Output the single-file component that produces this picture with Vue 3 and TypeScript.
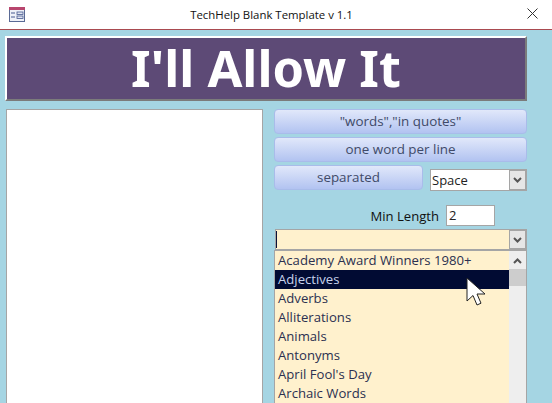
<script setup lang="ts">
const items: string[] = [
  'Academy Award Winners 1980+',
  'Adjectives',
  'Adverbs',
  'Alliterations',
  'Animals',
  'Antonyms',
  "April Fool's Day",
  'Archaic Words',
]
const selected = 'Adjectives'
</script>

<template>
  <div class="window">
    <header class="titlebar">
      <svg class="app-icon" width="16" height="16" viewBox="0 0 16 16">
        <rect x="0.5" y="0.5" width="15" height="14" fill="#eef1f8" stroke="#5a6a95" />
        <rect x="0" y="0" width="16" height="3" fill="#b8466e" />
        <path d="M2 6h4M2 10h4" stroke="#47598f" stroke-width="1" />
        <rect x="8" y="5" width="6" height="2.5" fill="#dfe4f1" stroke="#47598f" stroke-width="0.8" />
        <rect x="8" y="9" width="6" height="2.5" fill="#dfe4f1" stroke="#47598f" stroke-width="0.8" />
      </svg>
      <span class="title">TechHelp Blank Template v 1.1</span>
      <svg class="close" width="11" height="11" viewBox="0 0 11 11">
        <path d="M0.5 0.5l10 10M10.500 0.5l-10 10" stroke="#333" stroke-width="1" fill="none" />
      </svg>
    </header>

    <main class="form">
      <div class="banner">I'll Allow It</div>
      <div class="columns">
        <div class="output"></div>
        <div class="controls">
          <button class="btn">"words","in quotes"</button>
          <button class="btn">one word per line</button>
          <div class="sep-row">
            <button class="btn sep">separated</button>
            <div class="select">
              <span class="select-value">Space</span>
              <span class="drop">
                <svg width="9" height="6" viewBox="0 0 9 6"><path d="M1 1l3.5 3.5L8 1" stroke="#555" stroke-width="2" fill="none" /></svg>
              </span>
            </div>
          </div>
          <div class="min-row">
            <label class="min-label">Min Length</label>
            <div class="min-input">2</div>
          </div>
          <div class="combo">
            <div class="combo-head">
              <span class="caret"></span>
              <span class="drop">
                <svg width="9" height="6" viewBox="0 0 9 6"><path d="M1 1l3.5 3.5L8 1" stroke="#555" stroke-width="2" fill="none" /></svg>
              </span>
            </div>
            <div class="list">
              <ul class="rows">
                <li v-for="item in items" :key="item" class="row" :class="{ active: item === selected }">{{ item }}</li>
              </ul>
              <div class="scrollbar">
                <svg class="up" width="9" height="6" viewBox="0 0 9 6"><path d="M1 5l3.5-3.500L8 5" stroke="#555" stroke-width="2" fill="none" /></svg>
                <div class="thumb"></div>
              </div>
              <svg class="pointer" width="20" height="30" viewBox="0 0 20 30">
                <path d="M1 1v23l6-5.500 4 9.500 4-1.800-4-9.200h8z" fill="#fff" stroke="#222" stroke-width="1" />
              </svg>
            </div>
          </div>
        </div>
      </div>
    </main>
  </div>
</template>

<style>
html, body { margin: 0; background: #a5d5e3; }
</style>

<style scoped>
.window {
  width: 552px;
  height: 403px;
  overflow: hidden;
  display: flex;
  flex-direction: column;
  background: #a5d5e3;
  font-family: "Open Sans", "Noto Sans", sans-serif;
}
.titlebar {
  height: 29px;
  flex: none;
  box-sizing: content-box;
  background: #fff;
  border-bottom: 1px solid #a94a50;
  display: flex;
  align-items: center;
  position: relative;
  padding: 0 14px 0 9px;
  justify-content: space-between;
}
.title {
  position: absolute;
  left: 0;
  right: 9px;
  text-align: center;
  font-size: 11.4px;
  color: #111;
}
.close { margin-top: -2px; }
.form {
  flex: 1;
  padding: 6px 25px 0 5px;
  display: flex;
  flex-direction: column;
  min-height: 0;
}
.banner {
  height: 65px;
  box-sizing: border-box;
  background: #5d4a76;
  border: 2px solid;
  border-color: #fff #7b7b7b #7b7b7b #fff;
  color: #fff;
  font-family: "Noto Sans", sans-serif;
  font-weight: 700;
  font-size: 50.500px;
  line-height: 59px;
  text-align: center;
}
.columns {
  flex: 1;
  display: flex;
  gap: 11px;
  margin-top: 8px;
  min-height: 0;
}
.output {
  width: 257px;
  margin: 0 0 -2px 1px;
  box-sizing: border-box;
  background: #fff;
  border: 1px solid #a5a5a5;
}
.controls {
  flex: 1;
  display: flex;
  flex-direction: column;
  gap: 3px;
  min-width: 0;
}
.btn {
  height: 25px;
  width: 100%;
  box-sizing: border-box;
  border: 1px solid #a9bcea;
  border-radius: 4px;
  background: linear-gradient(#e1e8fa, #b2c3f1);
  color: #3f4a68;
  font-family: inherit;
  font-size: 13.400px;
  padding: 0 0 2px;
}
.sep-row {
  display: flex;
  gap: 7px;
}
.sep { width: 149px; flex: none; }
.select {
  flex: 1;
  height: 22px;
  margin-top: 4px;
  box-sizing: border-box;
  background: #fff;
  border: 1px solid #a5a5a5;
  display: flex;
  align-items: stretch;
  justify-content: space-between;
  font-size: 13px;
  color: #222;
}
.select-value { padding-left: 1px; line-height: 20px; }
.drop {
  width: 17px;
  box-sizing: border-box;
  background: #e6e6e6;
  border: 1px solid #a5a5a5;
  display: flex;
  align-items: center;
  justify-content: center;
}
.min-row {
  margin-top: 11px;
  display: flex;
  justify-content: flex-end;
  align-items: center;
  gap: 7px;
  padding-right: 32px;
}
.min-label { font-size: 13.100px; color: #111; }
.min-input {
  width: 49px;
  height: 21px;
  box-sizing: border-box;
  background: #fff;
  border: 1px solid #a5a5a5;
  font-size: 13px;
  line-height: 19px;
  padding-left: 2px;
  color: #222;
}
.combo { flex: 1; display: flex; flex-direction: column; min-height: 0; }
.combo-head {
  height: 21px;
  flex: none;
  margin-left: 1px;
  box-sizing: border-box;
  background: #fff1cd;
  border: 1px solid #a5a5a5;
  display: flex;
  justify-content: space-between;
  align-items: stretch;
}
.caret { width: 1px; height: 17px; margin: 1px 0 0 0; background: #0a1238; }
.list {
  flex: 1;
  position: relative;
  display: flex;
  box-sizing: border-box;
  background: #fff1cd;
  border: 1px solid #a5a5a5;
  border-bottom: 0;
  min-height: 0;
  overflow: hidden;
}
.rows {
  flex: 1;
  list-style: none;
  margin: 0;
  padding: 0;
  min-width: 0;
}
.row {
  height: 19px;
  line-height: 18px;
  padding-left: 3px;
  font-size: 13.130px;
  color: #2b3050;
  white-space: nowrap;
}
.row.active { background: #010b33; color: #c7d3ec; }
.scrollbar {
  width: 17px;
  flex: none;
  background: #eeeeee;
  display: flex;
  flex-direction: column;
  align-items: center;
}
.up { margin-top: 7px; margin-bottom: 5px; }
.thumb { width: 100%; height: 17px; background: #cdcdcd; }
.pointer {
  position: absolute;
  left: 191px;
  top: 26px;
}
</style>
